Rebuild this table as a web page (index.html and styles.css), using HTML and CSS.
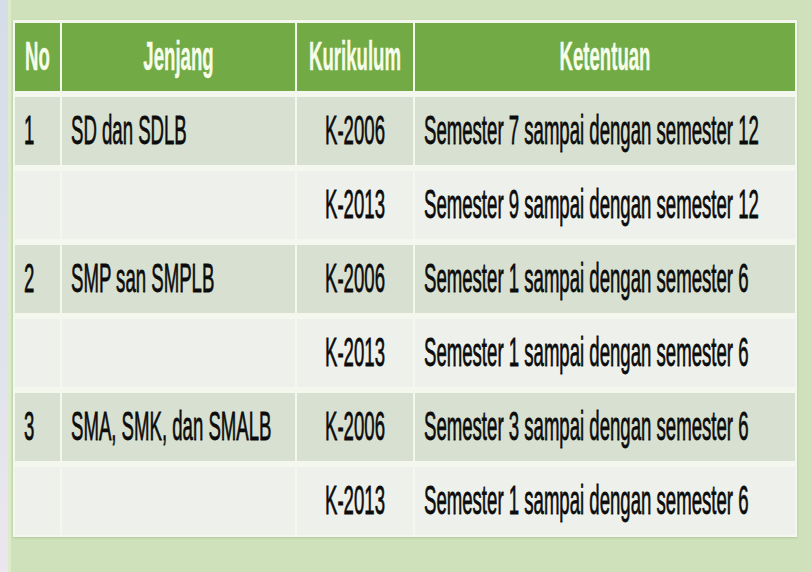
FILE: index.html
```html
<!DOCTYPE html>
<html lang="id">
<head>
<meta charset="utf-8">
<title>Ketentuan Kurikulum</title>
<link rel="stylesheet" href="styles.css">
</head>
<body>
<div class="page">
  <div class="strip"></div>
  <div class="edge"></div>
  <main class="content">
    <div class="table">
      <div class="cell head"><span class="t">No</span></div>
      <div class="cell head"><span class="t">Jenjang</span></div>
      <div class="cell head"><span class="t">Kurikulum</span></div>
      <div class="cell head"><span class="t">Ketentuan</span></div>

      <div class="cell odd"><span class="t">1</span></div>
      <div class="cell odd"><span class="t">SD dan SDLB</span></div>
      <div class="cell odd mid"><span class="t">K-2006</span></div>
      <div class="cell odd"><span class="t">Semester 7 sampai dengan semester 12</span></div>

      <div class="cell even"></div>
      <div class="cell even"></div>
      <div class="cell even mid"><span class="t">K-2013</span></div>
      <div class="cell even"><span class="t">Semester 9 sampai dengan semester 12</span></div>

      <div class="cell odd"><span class="t">2</span></div>
      <div class="cell odd"><span class="t">SMP san SMPLB</span></div>
      <div class="cell odd mid"><span class="t">K-2006</span></div>
      <div class="cell odd"><span class="t">Semester 1 sampai dengan semester 6</span></div>

      <div class="cell even"></div>
      <div class="cell even"></div>
      <div class="cell even mid"><span class="t">K-2013</span></div>
      <div class="cell even"><span class="t">Semester 1 sampai dengan semester 6</span></div>

      <div class="cell odd"><span class="t">3</span></div>
      <div class="cell odd"><span class="t">SMA, SMK, dan SMALB</span></div>
      <div class="cell odd mid"><span class="t">K-2006</span></div>
      <div class="cell odd"><span class="t">Semester 3 sampai dengan semester 6</span></div>

      <div class="cell even"></div>
      <div class="cell even"></div>
      <div class="cell even mid"><span class="t">K-2013</span></div>
      <div class="cell even"><span class="t">Semester 1 sampai dengan semester 6</span></div>
    </div>
  </main>
</div>
</body>
</html>
```

FILE: styles.css
```css
html, body {
  margin: 0;
  padding: 0;
}
body {
  width: 811px;
  height: 572px;
  overflow: hidden;
  background: #cee1bb;
  font-family: "Liberation Sans", Arial, sans-serif;
}
.page {
  display: flex;
  height: 572px;
}
.strip {
  width: 8px;
  flex: none;
  background: linear-gradient(#d5dde9, #dfe3ec 60%, #ece6ee);
}
.edge {
  width: 3px;
  flex: none;
  background: #dcecc9;
}
.content {
  padding: 20px 0 0 2px;
}
.table {
  display: grid;
  grid-template-columns: 45px 233px 116px 380px;
  grid-auto-rows: 68px;
  column-gap: 2px;
  row-gap: 6px;
  padding: 3px 2px 2px 2px;
  background: #f3f7ee;
  box-shadow: 0 1px 2px rgba(120, 150, 100, 0.35);
}
.cell {
  display: flex;
  align-items: center;
  padding: 0 9px;
  color: #0c0c0c;
  font-size: 18.6px;
  white-space: nowrap;
  -webkit-text-stroke: 0.35px #0c0c0c;
}
.t {
  display: inline-block;
  transform: scaleY(2.2);
  line-height: 1;
}
.head {
  background: #72aa45;
  color: #f6fde9;
  -webkit-text-stroke: 0.2px #f6fde9;
  font-weight: bold;
  justify-content: center;
  padding: 0;
}
.mid {
  justify-content: center;
  padding: 0;
}
.odd {
  background: #d8e1d1;
}
.even {
  background: #eef1eb;
}
```
